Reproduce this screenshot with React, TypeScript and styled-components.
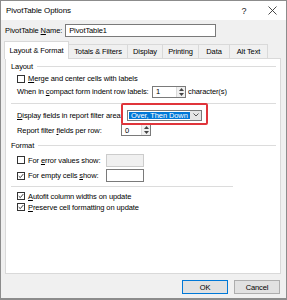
import type { FC, ReactNode } from "react";
import styled, { createGlobalStyle } from "styled-components";

const GlobalStyle = createGlobalStyle`
  html, body {
    margin: 0;
    padding: 0;
    background: #ffffff;
  }
  * {
    box-sizing: border-box;
  }
`;

const Window = styled.div`
  width: 287px;
  height: 300px;
  display: flex;
  flex-direction: column;
  background: #f0f0f0;
  border: 1px solid #8c8c8c;
  border-bottom-width: 2px;
  font-family: "Liberation Sans", Arial, sans-serif;
  font-size: 7.5px;
  letter-spacing: -0.1px;
  color: #000;
`;

const TitleBar = styled.div`
  height: 19px;
  background: #ffffff;
  display: flex;
  align-items: center;
  padding-left: 5px;
`;

const Title = styled.div`
  flex: 1;
  font-size: 8px;
`;

const TitleButton = styled.div`
  width: 28px;
  height: 19px;
  display: flex;
  align-items: center;
  justify-content: center;
  font-size: 9px;
  color: #222;
`;

const NameRow = styled.div`
  display: flex;
  align-items: center;
  height: 13px;
  margin: 4px 0 0 4px;
  gap: 3px;
`;

const TextBox = styled.div<{ $w: number; $h?: number; $disabled?: boolean }>`
  width: ${({ $w }) => $w}px;
  height: ${({ $h }) => $h ?? 13}px;
  background: ${({ $disabled }) => ($disabled ? "#f0f0f0" : "#ffffff")};
  border: 1px solid ${({ $disabled }) => ($disabled ? "#cccccc" : "#7a7a7a")};
  display: flex;
  align-items: center;
  padding-left: 3px;
`;

const Tabs = styled.div`
  display: flex;
  align-items: flex-end;
  height: 18px;
  margin: 4px 0 0 4px;
`;

const Tab = styled.div<{ $active?: boolean; $w: number }>`
  width: ${({ $w }) => $w}px;
  height: ${({ $active }) => ($active ? 18 : 15)}px;
  display: flex;
  align-items: center;
  justify-content: center;
  background: ${({ $active }) => ($active ? "#ffffff" : "#f0f0f0")};
  border: 1px solid #d9d9d9;
  border-bottom: ${({ $active }) => ($active ? "none" : "1px solid #d9d9d9")};
  margin-left: -1px;
  position: relative;
  z-index: ${({ $active }) => ($active ? 1 : 0)};
`;

const Panel = styled.div`
  height: 216px;
  margin: -1px 5px 0 4px;
  background: #ffffff;
  border: 1px solid #d9d9d9;
  padding: 2px 4px 0 5px;
  display: flex;
  flex-direction: column;
`;

const GroupHeader = styled.div<{ $h: number }>`
  height: ${({ $h }) => $h}px;
  display: flex;
  align-items: center;
  gap: 4px;
  &::after {
    content: "";
    flex: 1;
    height: 1px;
    background: #dcdcdc;
  }
`;

const Row = styled.div<{ $h: number }>`
  height: ${({ $h }) => $h}px;
  display: flex;
  align-items: center;
  padding-left: 6px;
`;

const Label = styled.span<{ $w?: number }>`
  display: inline-block;
  ${({ $w }) => ($w ? `width: ${$w}px;` : "")}
  white-space: nowrap;
`;

const Separator = styled.div<{ $w?: number; $mt: number; $mb: number }>`
  height: 1px;
  width: ${({ $w }) => ($w ? `${$w}px` : "auto")};
  background: #dcdcdc;
  margin: ${({ $mt, $mb }) => `${$mt}px 0 ${$mb}px`};
`;

const Box = styled.div`
  width: 8px;
  height: 8px;
  border: 1px solid #333333;
  background: #ffffff;
  margin-right: 3px;
  display: flex;
  align-items: center;
  justify-content: center;
`;

const Spinner = styled.div<{ $w: number }>`
  width: ${({ $w }) => $w}px;
  height: 12px;
  border: 1px solid #7a7a7a;
  background: #ffffff;
  display: flex;
  align-items: stretch;
`;

const SpinValue = styled.div`
  flex: 1;
  padding-left: 3px;
  display: flex;
  align-items: center;
`;

const SpinButtons = styled.div`
  width: 9px;
  display: flex;
  flex-direction: column;
  border-left: 1px solid #dadada;
  background: #f0f0f0;
`;

const SpinHalf = styled.div`
  flex: 1;
  display: flex;
  align-items: center;
  justify-content: center;
`;

const DropWrap = styled.div`
  position: relative;
`;

const Dropdown = styled.div`
  width: 75px;
  height: 11px;
  border: 1px solid #7a7a7a;
  background: #ffffff;
  display: flex;
  align-items: stretch;
`;

const Selected = styled.div`
  flex: 1;
  margin: 1px 0 1px 1px;
  background: #0078d7;
  color: #ffffff;
  display: flex;
  align-items: center;
  padding-left: 2px;
  white-space: nowrap;
  overflow: hidden;
`;

const DropArrow = styled.div`
  width: 11px;
  display: flex;
  align-items: center;
  justify-content: center;
  background: #e5e5e5;
`;

const Highlight = styled.div`
  position: absolute;
  left: -6px;
  top: -7px;
  right: -6px;
  bottom: -4px;
  border: 2.5px solid #e0353b;
  border-radius: 2px;
  pointer-events: none;
`;

const Footer = styled.div`
  flex: 1;
  display: flex;
  justify-content: flex-end;
  align-items: flex-start;
  gap: 6px;
  padding: 6px 6px 0 0;
`;

const Button = styled.div<{ $primary?: boolean }>`
  width: 46px;
  height: 14px;
  background: #e1e1e1;
  border: 1px solid ${({ $primary }) => ($primary ? "#0078d7" : "#adadad")};
  display: flex;
  align-items: center;
  justify-content: center;
`;

const Check: FC<{ on?: boolean }> = ({ on }) => (
  <Box>
    {on && (
      <svg width="6" height="6" viewBox="0 0 7 7">
        <path d="M0.8 3.6 L2.7 5.4 L6.2 1.2" fill="none" stroke="#222" strokeWidth="1" />
      </svg>
    )}
  </Box>
);

const SpinBox: FC<{ value: string; w: number }> = ({ value, w }) => (
  <Spinner $w={w}>
    <SpinValue>{value}</SpinValue>
    <SpinButtons>
      <SpinHalf>
        <svg width="5" height="3" viewBox="0 0 5 3">
          <path d="M0 3 L2.5 0 L5 3 Z" fill="#444" />
        </svg>
      </SpinHalf>
      <SpinHalf>
        <svg width="5" height="3" viewBox="0 0 5 3">
          <path d="M0 0 L2.5 3 L5 0 Z" fill="#444" />
        </svg>
      </SpinHalf>
    </SpinButtons>
  </Spinner>
);

const U: FC<{ children: ReactNode }> = ({ children }) => <u>{children}</u>;

const App: FC = () => {
  return (
    <>
      <GlobalStyle />
      <Window>
        <TitleBar>
          <Title>PivotTable Options</Title>
          <TitleButton>?</TitleButton>
          <TitleButton>
            <svg width="9" height="9" viewBox="0 0 9 9">
              <path d="M0.5 0.5 L8.5 8.5 M8.5 0.5 L0.5 8.5" stroke="#333" strokeWidth="0.9" />
            </svg>
          </TitleButton>
        </TitleBar>

        <NameRow>
          <Label>
            PivotTable <U>N</U>ame:
          </Label>
          <TextBox $w={151}>PivotTable1</TextBox>
        </NameRow>

        <Tabs>
          <Tab $active $w={65}>Layout &amp; Format</Tab>
          <Tab $w={60}>Totals &amp; Filters</Tab>
          <Tab $w={36}>Display</Tab>
          <Tab $w={37}>Printing</Tab>
          <Tab $w={32}>Data</Tab>
          <Tab $w={39}>Alt Text</Tab>
        </Tabs>

        <Panel>
          <GroupHeader $h={11}>Layout</GroupHeader>
          <Row $h={13}>
            <Check />
            <Label>
              <U>M</U>erge and center cells with labels
            </Label>
          </Row>
          <Row $h={13}>
            <Label $w={135}>
              When in <U>c</U>ompact form indent row labels:
            </Label>
            <SpinBox value="1" w={34} />
            <Label>&nbsp;character(s)</Label>
          </Row>
          <Separator $mt={5} $mb={4} />
          <Row $h={14}>
            <Label $w={110}>
              <U>D</U>isplay fields in report filter area:
            </Label>
            <DropWrap>
              <Dropdown>
                <Selected>Over, Then Down</Selected>
                <DropArrow>
                  <svg width="6" height="4" viewBox="0 0 6 4">
                    <path d="M0.5 0.5 L3 3 L5.5 0.5" fill="none" stroke="#444" strokeWidth="0.9" />
                  </svg>
                </DropArrow>
              </Dropdown>
              <Highlight />
            </DropWrap>
          </Row>
          <Row $h={16}>
            <Label $w={104}>
              Report filter <U>f</U>ields per row:
            </Label>
            <SpinBox value="0" w={30} />
          </Row>
          <GroupHeader $h={15}>Format</GroupHeader>
          <Row $h={14}>
            <Check />
            <Label $w={78}>
              For <U>e</U>rror values show:
            </Label>
            <TextBox $w={38} $disabled />
          </Row>
          <Row $h={17}>
            <Check on />
            <Label $w={78}>
              For empty cells <U>s</U>how:
            </Label>
            <TextBox $w={38} />
          </Row>
          <Separator $w={222} $mt={2} $mb={3} />
          <Row $h={12}>
            <Check on />
            <Label>
              <U>A</U>utofit column widths on update
            </Label>
          </Row>
          <Row $h={10}>
            <Check on />
            <Label>
              <U>P</U>reserve cell formatting on update
            </Label>
          </Row>
        </Panel>

        <Footer>
          <Button $primary>OK</Button>
          <Button>Cancel</Button>
        </Footer>
      </Window>
    </>
  );
};

export default App;
